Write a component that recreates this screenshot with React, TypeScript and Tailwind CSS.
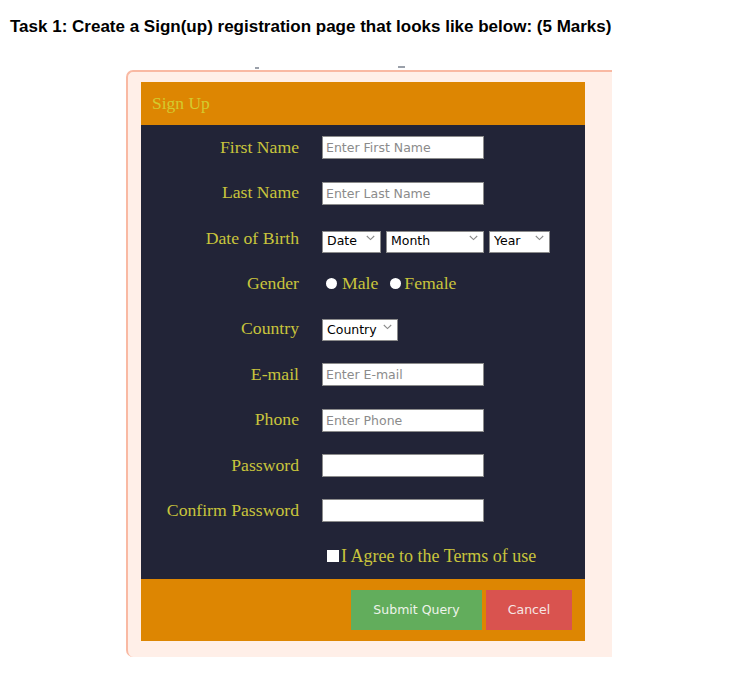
import React from 'react';

const labelCls = "text-right text-[17.7px] leading-none text-[#c9c43c]";
const serif = { fontFamily: '"Liberation Serif", "Times New Roman", serif' };
const sans = { fontFamily: '"DejaVu Sans", Verdana, sans-serif' };

function Chevron() {
    return (
        <svg width="9" height="6" viewBox="0 0 9 6" className="pointer-events-none absolute right-[6px] top-1/2 -translate-y-1/2">
            <path d="M0.8 1 L4.5 4.6 L8.2 1" fill="none" stroke="#8a8a8a" strokeWidth="1.1" />
        </svg>
    );
}

function Select({ text, width }: { text: string; width: string }) {
    return (
        <div className={`relative h-[22px] ${width}`}>
            <select
                className="h-full w-full appearance-none border border-[#8c8c8c] bg-white pl-[4px] text-[12.5px] text-black outline-none"
                style={sans}
                defaultValue={text}
            >
                <option>{text}</option>
            </select>
            <Chevron />
        </div>
    );
}

function TextInput({ placeholder, type = 'text' }: { placeholder?: string; type?: string }) {
    return (
        <input
            type={type}
            placeholder={placeholder}
            className="h-[23px] w-[162px] border border-[#8c8c8c] bg-white px-[3px] text-[12.5px] text-black outline-none placeholder:text-[#8b8b8b]"
            style={sans}
        />
    );
}

function Row({ label, children }: { label?: string; children: React.ReactNode }) {
    return (
        <div className="grid h-[45.4px] grid-cols-[158px_1fr] items-center gap-x-[23px]">
            <span className={labelCls} style={serif}>{label}</span>
            <div className="flex items-center">{children}</div>
        </div>
    );
}

export default function App() {
    return (
        <div className="h-[681px] w-[736px] overflow-hidden bg-white">
            <div className="h-[66px] pl-[10px] pt-[14px]">
                <p
                    className="text-[17px] font-bold leading-[26px] text-black"
                    style={{ fontFamily: '"Liberation Sans", Arial, sans-serif' }}
                >
                    Task 1: Create a Sign(up) registration page that looks like below: (5 Marks)
                </p>
            </div>

            {/* stray marks above the box */}
            <div className="flex h-[4px] items-start pl-[126px]">
                <span className="ml-[129px] mt-[1px] h-[2px] w-[4px] bg-[#9aa0aa]" />
                <span className="ml-[139px] h-[2px] w-[7px] bg-[#9aa0aa]" />
            </div>

            <div className="ml-[126px] h-[587px] w-[486px] rounded-tl-[7px] rounded-bl-[7px] border-l-2 border-t-2 border-[#f9b9a3] bg-[#ffefe8] pl-[13px] pt-[10px]">
                <div className="w-[444px]">
                    {/* Header */}
                    <div className="flex h-[43px] items-center bg-[#dd8602] pl-[11px]">
                        <span className="text-[17.5px] leading-none text-[#d4cb2e]" style={serif}>Sign Up</span>
                    </div>

                    {/* Body */}
                    <div className="h-[454px] bg-[#222437]">
                        <Row label="First Name"><TextInput placeholder="Enter First Name" /></Row>
                        <Row label="Last Name"><TextInput placeholder="Enter Last Name" /></Row>
                        <Row label="Date of Birth">
                            <div className="flex gap-[5px]">
                                <Select text="Date" width="w-[59px]" />
                                <Select text="Month" width="w-[98px]" />
                                <Select text="Year" width="w-[61px]" />
                            </div>
                        </Row>
                        <Row label="Gender">
                            <div className="flex items-center text-[17.7px] leading-none text-[#c9c43c]" style={serif}>
                                <span className="ml-[4px] mr-[5px] h-[11px] w-[11px] rounded-full bg-white" />
                                <span>Male</span>
                                <span className="ml-[12px] mr-[3px] h-[11px] w-[11px] rounded-full bg-white" />
                                <span>Female</span>
                            </div>
                        </Row>
                        <Row label="Country">
                            <div className="-mt-[5px]"><Select text="Country" width="w-[76px]" /></div>
                        </Row>
                        <Row label="E-mail"><TextInput placeholder="Enter E-mail" /></Row>
                        <Row label="Phone"><TextInput placeholder="Enter Phone" /></Row>
                        <Row label="Password"><TextInput type="password" /></Row>
                        <Row label="Confirm Password"><TextInput type="password" /></Row>
                        <Row>
                            <div className="flex items-center text-[18px] leading-none text-[#c9c43c]" style={serif}>
                                <span className="ml-[5px] mr-[2px] h-[12px] w-[12px] bg-white" />
                                <span>I Agree to the Terms of use</span>
                            </div>
                        </Row>
                    </div>

                    {/* Footer */}
                    <div className="flex h-[62px] items-center justify-end gap-[4px] bg-[#dd8602] pr-[13px]">
                        <button className="h-[40px] w-[131px] bg-[#62ad5c] text-[12.5px] text-[#eef3ea]" style={sans}>
                            Submit Query
                        </button>
                        <button className="h-[40px] w-[86px] bg-[#d9534f] text-[12.5px] text-[#f6e6e4]" style={sans}>
                            Cancel
                        </button>
                    </div>
                </div>
            </div>
        </div>
    );
}
